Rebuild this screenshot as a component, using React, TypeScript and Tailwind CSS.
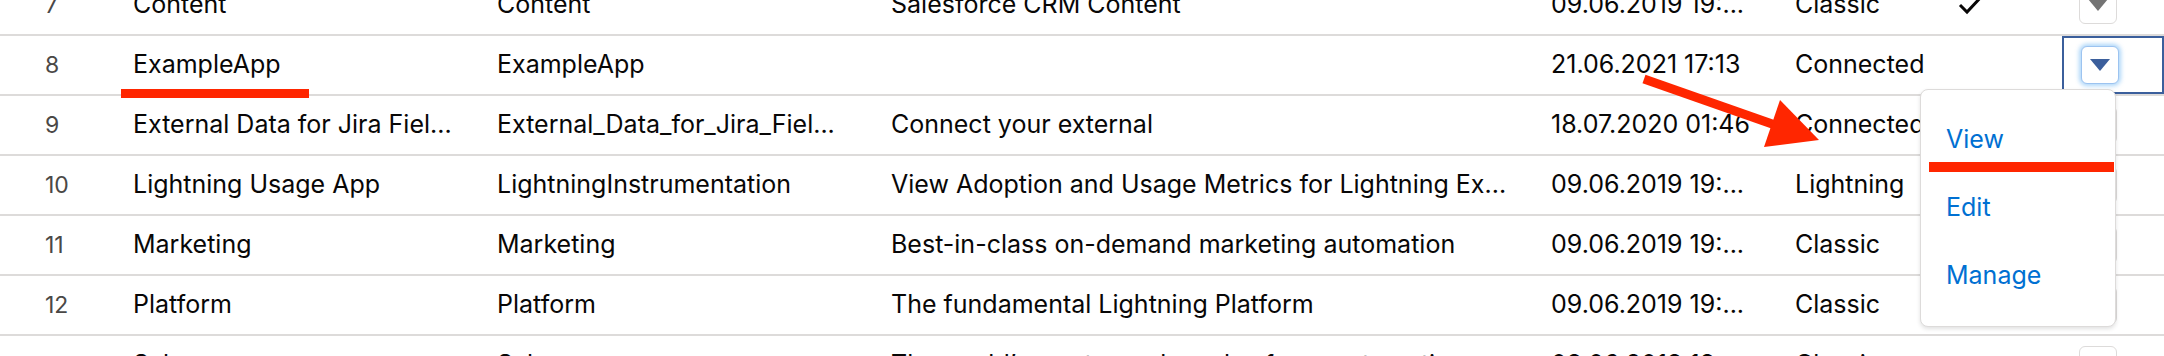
import React from 'react';

type Row = {
  num: number;
  label: string;
  apiName: string;
  description: string;
  modified: string;
  appType: string;
  checked?: boolean;
};

const rows: Row[] = [
  { num: 7, label: 'Content', apiName: 'Content', description: 'Salesforce CRM Content', modified: '09.06.2019 19:...', appType: 'Classic', checked: true },
  { num: 8, label: 'ExampleApp', apiName: 'ExampleApp', description: '', modified: '21.06.2021 17:13', appType: 'Connected' },
  { num: 9, label: 'External Data for Jira Fiel...', apiName: 'External_Data_for_Jira_Fiel...', description: 'Connect your external', modified: '18.07.2020 01:46', appType: 'Connected' },
  { num: 10, label: 'Lightning Usage App', apiName: 'LightningInstrumentation', description: 'View Adoption and Usage Metrics for Lightning Ex...', modified: '09.06.2019 19:...', appType: 'Lightning' },
  { num: 11, label: 'Marketing', apiName: 'Marketing', description: 'Best-in-class on-demand marketing automation', modified: '09.06.2019 19:...', appType: 'Classic' },
  { num: 12, label: 'Platform', apiName: 'Platform', description: 'The fundamental Lightning Platform', modified: '09.06.2019 19:...', appType: 'Classic' },
  { num: 13, label: 'Sales', apiName: 'Sales', description: 'The world\u2019s most popular sales force automation...', modified: '09.06.2019 19:...', appType: 'Classic' },
];

const font = { fontFamily: 'Inter, "Liberation Sans", Arial, sans-serif' };

const MenuButton: React.FC<{ focused?: boolean }> = ({ focused }) => (
  <button
    className={`flex h-[38px] w-[38px] items-center justify-center rounded-md border bg-white ${
      focused ? 'border-[#9cc3f0] shadow-[0_0_4px_2px_rgba(21,137,238,0.35)]' : 'border-[#dddbda]'
    }`}
  >
    <svg width="20" height="13" viewBox="0 0 20 13">
      <path d="M0 0 L20 0 L10 12 Z" fill={focused ? '#3b5f9c' : '#747474'} />
    </svg>
  </button>
);

const Check = () => (
  <svg width="26" height="22" viewBox="0 0 26 22">
    <path d="M2 11 L9 18 L24 2" fill="none" stroke="#080707" strokeWidth="3" />
  </svg>
);

export default function App() {
  return (
    <div className="relative h-[356px] w-[2164px] overflow-hidden bg-white text-[25px] text-[#080707]" style={font}>
      <div className="mt-[-26px]">
        {rows.map((r) => {
          const selected = r.num === 8;
          return (
            <div
              key={r.num}
              className="grid h-[60px] grid-cols-[121px_364px_394px_660px_244px_147px_132px_1fr] items-center border-t-2 border-[#dddbda]"
            >
              <div className="pl-[45px] text-[23px] text-[#4a4846]">{r.num}</div>
              <div className="overflow-hidden whitespace-nowrap pl-3">{r.label}</div>
              <div className="overflow-hidden whitespace-nowrap pl-3">{r.apiName}</div>
              <div className="overflow-hidden whitespace-nowrap pl-3">{r.description}</div>
              <div className="overflow-hidden whitespace-nowrap pl-3">{r.modified}</div>
              <div className="whitespace-nowrap pl-3">{r.appType}</div>
              <div className="flex pl-[28px]">{r.checked && <Check />}</div>
              <div
                className={`flex h-full items-center pl-[17px] ${
                  selected ? 'border-2 border-[#3b5f9c] pl-[15px]' : ''
                }`}
              >
                <MenuButton focused={selected} />
              </div>
            </div>
          );
        })}
      </div>

      {/* annotation: underline under ExampleApp */}
      <div className="absolute left-[121px] top-[89px] h-[9px] w-[188px] bg-[#ff2600]" />

      {/* row action menu */}
      <div className="absolute left-[1920px] top-[89px] w-[196px] rounded-lg border border-[#dddbda] bg-white py-4 shadow-[0_2px_4px_rgba(0,0,0,0.12)]">
        {['View', 'Edit', 'Manage'].map((item) => (
          <div key={item} className="flex h-[68px] items-center pl-[25px] text-[#0070d2]">
            {item}
          </div>
        ))}
      </div>

      {/* annotation: underline under View */}
      <div className="absolute left-[1929px] top-[162px] h-[10px] w-[185px] bg-[#ff2600]" />

      {/* annotation: arrow */}
      <svg className="absolute left-[1620px] top-[60px]" width="220" height="110" viewBox="0 0 220 110">
        <line x1="24" y1="19" x2="155" y2="65" stroke="#ff2600" strokeWidth="9" />
        <polygon points="160,40 199,80 144,87" fill="#ff2600" />
      </svg>
    </div>
  );
}
